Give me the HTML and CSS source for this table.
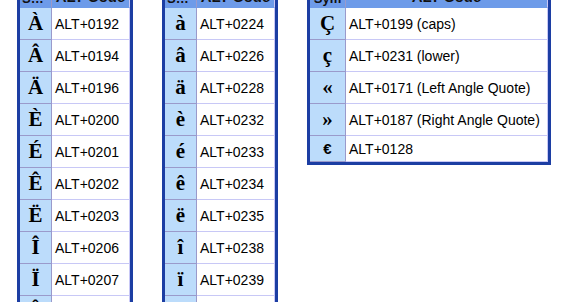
FILE: index.html
```html
<!DOCTYPE html>
<html>
<head>
  <meta charset="UTF-8">
  <title>Alt Codes</title>
  <link rel="stylesheet" href="styles.css">
</head>
<body>
  <div class="page">
    <table class="codes codes-upper">
      <tr><th class="sym">Sym</th><th>ALT Code</th></tr>
      <tr><td class="sym">À</td><td>ALT+0192</td></tr>
      <tr><td class="sym">Â</td><td>ALT+0194</td></tr>
      <tr><td class="sym">Ä</td><td>ALT+0196</td></tr>
      <tr><td class="sym">È</td><td>ALT+0200</td></tr>
      <tr><td class="sym">É</td><td>ALT+0201</td></tr>
      <tr><td class="sym">Ê</td><td>ALT+0202</td></tr>
      <tr><td class="sym">Ë</td><td>ALT+0203</td></tr>
      <tr><td class="sym">Î</td><td>ALT+0206</td></tr>
      <tr><td class="sym">Ï</td><td>ALT+0207</td></tr>
      <tr><td class="sym">Ô</td><td>ALT+0212</td></tr>
    </table>

    <table class="codes codes-lower">
      <tr><th class="sym">Sym</th><th>ALT Code</th></tr>
      <tr><td class="sym">à</td><td>ALT+0224</td></tr>
      <tr><td class="sym">â</td><td>ALT+0226</td></tr>
      <tr><td class="sym">ä</td><td>ALT+0228</td></tr>
      <tr><td class="sym">è</td><td>ALT+0232</td></tr>
      <tr><td class="sym">é</td><td>ALT+0233</td></tr>
      <tr><td class="sym">ê</td><td>ALT+0234</td></tr>
      <tr><td class="sym">ë</td><td>ALT+0235</td></tr>
      <tr><td class="sym">î</td><td>ALT+0238</td></tr>
      <tr><td class="sym">ï</td><td>ALT+0239</td></tr>
      <tr><td class="sym">ô</td><td>ALT+0244</td></tr>
    </table>

    <table class="codes codes-other">
      <tr><th class="sym">Sym</th><th>ALT Code</th></tr>
      <tr><td class="sym">Ç</td><td>ALT+0199 (caps)</td></tr>
      <tr><td class="sym">ç</td><td>ALT+0231 (lower)</td></tr>
      <tr><td class="sym">«</td><td>ALT+0171 (Left Angle Quote)</td></tr>
      <tr><td class="sym">»</td><td>ALT+0187 (Right Angle Quote)</td></tr>
      <tr class="short"><td class="sym euro">€</td><td>ALT+0128</td></tr>
    </table>
  </div>
</body>
</html>
```

FILE: styles.css
```css
body {
  margin: 0 0 0 17px;
  font-family: "Liberation Sans", Arial, sans-serif;
  background: #fff;
}

/* the list is scrolled a little, header row half hidden */
.page {
  display: flex;
  align-items: flex-start;
  gap: 29px;
  margin-top: -20px;
}

.codes {
  box-sizing: border-box;
  border: 3px solid #1c3ea3;
  border-collapse: separate;
  border-spacing: 0;
  table-layout: fixed;
  flex: none;
}

.codes-upper,
.codes-lower { width: 116px; }
.codes-other { width: 244px; }

.codes th,
.codes td {
  box-sizing: border-box;
  border-right: 1px solid #c8c8f6;
  border-bottom: 1px solid #c8c8f6;
  padding: 0 3px;
  font-size: 14px;
  white-space: nowrap;
  overflow: hidden;
}

.codes th {
  height: 25px;
  background: #6d9be9;
  color: #111;
  font-size: 15px;
  font-weight: bold;
  vertical-align: bottom;
  padding-bottom: 2px;
  line-height: 16px;
  text-overflow: ellipsis;
  border-bottom-color: #6d9be9;
}

.codes td {
  height: 32px;
  background: #fff;
  color: #000;
  text-align: left;
}

.codes .sym {
  background: #bcdcfb;
  border-right-color: #9a9acb;
  border-bottom-color: #9a9acb;
  text-align: center;
  padding: 0 2px;
}

.codes td.sym {
  font-family: "Liberation Serif", "Times New Roman", serif;
  font-weight: bold;
  font-size: 21px;
}

.codes th.sym {
  background: #6d9be9;
  border-bottom-color: #6d9be9;
  font-size: 13px;
}

.codes .short td {
  height: 26px;
}

.codes td.euro {
  font-family: "Liberation Sans", Arial, sans-serif;
  font-size: 15px;
}

.codes-upper .sym,
.codes-lower .sym { width: 32px; }

.codes-other .sym { width: 36px; }
```
